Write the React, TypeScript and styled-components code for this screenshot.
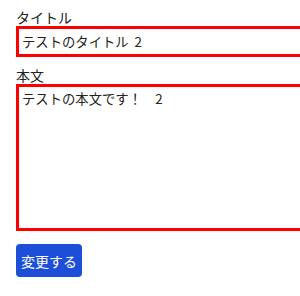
import React from "react";
import styled, { createGlobalStyle } from "styled-components";

const Global = createGlobalStyle`
  html, body { margin: 0; padding: 0; background: #fff; }
  body { font-family: "Noto Sans CJK JP", "Noto Sans", sans-serif; color: #222; }
`;

const Form = styled.form`
  display: flex;
  flex-direction: column;
  padding: 8px 16px 0;
  width: 340px;
`;

const Field = styled.div<{ $gap: number }>`
  display: flex;
  flex-direction: column;
  margin-bottom: ${(p) => p.$gap}px;
`;

const Label = styled.label`
  font-size: 14px;
  line-height: 18px;
  color: #222;
`;

const TextInput = styled.input`
  box-sizing: border-box;
  height: 31px;
  border: 3px solid #ff0000;
  padding: 1px 3px;
  font-family: inherit;
  font-size: 13.333px;
  color: #222;
  outline: none;
`;

const TextArea = styled.textarea`
  box-sizing: border-box;
  height: 147px;
  border: 3px solid #ff0000;
  padding: 2px 3px;
  font-family: inherit;
  font-size: 13.333px;
  line-height: normal;
  color: #222;
  resize: none;
  outline: none;
`;

const Button = styled.button`
  align-self: flex-start;
  width: 66px;
  height: 33px;
  padding: 0;
  border: none;
  border-radius: 4px;
  background: #1d4ed8;
  color: #fff;
  font-family: inherit;
  font-size: 14px;
`;

export default function App() {
  return (
    <>
      <Global />
      <Form onSubmit={(e) => e.preventDefault()}>
        <Field $gap={9}>
          <Label>タイトル</Label>
          <TextInput defaultValue="テストのタイトル  2" />
        </Field>
        <Field $gap={13}>
          <Label>本文</Label>
          <TextArea defaultValue="テストの本文です！　2" />
        </Field>
        <Button type="button">変更する</Button>
      </Form>
    </>
  );
}
